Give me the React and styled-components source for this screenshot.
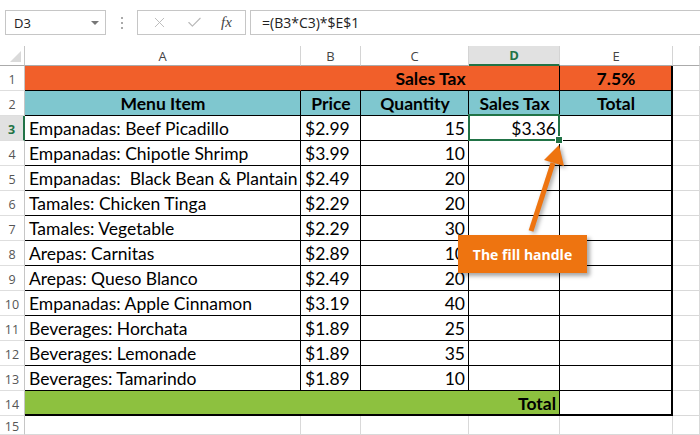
import React from "react";
import styled, { createGlobalStyle } from "styled-components";
import { X, Check } from "lucide-react";

const GlobalStyle = createGlobalStyle`
  body {
    margin: 0;
    background: #fff;
    font-family: "Lato", "Liberation Sans", sans-serif;
    overflow: hidden;
  }
`;

const GREEN = "#217346";
const GRID = "#d9d9d9";

const Page = styled.div`
  position: relative;
  width: 700px;
  height: 435px;
  overflow: hidden;
`;

const FormulaBar = styled.div`
  display: flex;
  align-items: stretch;
  height: 25px;
  padding: 10px 0 0 5px;
  margin-bottom: 11px;
`;

const NameBox = styled.div`
  width: 101px;
  box-sizing: border-box;
  border: 1px solid #c6c6c6;
  display: flex;
  align-items: center;
  justify-content: space-between;
  padding: 0 6px 0 8px;
  font-family: "Open Sans", sans-serif;
  font-size: 13px;
  color: #222;
`;

const DropArrow = styled.span`
  width: 0;
  height: 0;
  border-left: 4px solid transparent;
  border-right: 4px solid transparent;
  border-top: 4px solid #777;
`;

const Dots = styled.div`
  width: 31px;
  display: flex;
  flex-direction: column;
  align-items: center;
  justify-content: center;
  gap: 3px;
  span {
    width: 2px;
    height: 2px;
    background: #aaa;
  }
`;

const ButtonBox = styled.div`
  width: 109px;
  box-sizing: border-box;
  border: 1px solid #c6c6c6;
  display: flex;
  align-items: center;
  justify-content: space-around;
  padding: 0 4px;
  color: #b8b8b8;
`;

const Fx = styled.span`
  font-family: "Liberation Serif", serif;
  font-style: italic;
  font-size: 15px;
  color: #444;
`;

const FormulaInput = styled.div`
  flex: 1;
  margin-left: 4px;
  border: 1px solid #c6c6c6;
  border-right: none;
  display: flex;
  align-items: center;
  padding-left: 11px;
  font-family: "Open Sans", sans-serif;
  font-size: 14px;
  color: #222;
`;

const Sheet = styled.div`
  display: grid;
  grid-template-columns: 25px 276px 60px 108px 91px 113px 1fr;
  grid-template-rows: 20px repeat(14, 25px) 19px;
`;

const Corner = styled.div`
  position: relative;
  box-sizing: border-box;
  border-right: 1px solid #c6c6c6;
  border-bottom: 1px solid #ababab;
  &::after {
    content: "";
    position: absolute;
    right: 3px;
    bottom: 3px;
    border-left: 11px solid transparent;
    border-bottom: 11px solid #dadada;
  }
`;

const ColHead = styled.div`
  box-sizing: border-box;
  display: flex;
  align-items: center;
  justify-content: center;
  font-family: "Open Sans", sans-serif;
  font-size: 13px;
  color: ${(p) => (p.$active ? GREEN : "#444")};
  font-weight: ${(p) => (p.$active ? 700 : 400)};
  background: ${(p) => (p.$active ? "#e1e1e1" : "#fff")};
  border-right: 1px solid #d4d4d4;
  border-bottom: ${(p) => (p.$active ? `2px solid ${GREEN}` : "1px solid #ababab")};
`;

const RowHead = styled.div`
  box-sizing: border-box;
  display: flex;
  align-items: center;
  justify-content: center;
  padding-top: 2px;
  font-family: "Open Sans", sans-serif;
  font-size: 12.5px;
  color: ${(p) => (p.$active ? GREEN : "#555")};
  font-weight: ${(p) => (p.$active ? 700 : 400)};
  background: ${(p) => (p.$active ? "#e1e1e1" : "#fff")};
  border-right: ${(p) => (p.$active ? `2px solid ${GREEN}` : "1px solid #c6c6c6")};
  border-bottom: 1px solid #dedede;
`;

const Cell = styled.div`
  position: relative;
  box-sizing: border-box;
  display: flex;
  align-items: center;
  justify-content: ${(p) =>
    p.$align === "right" ? "flex-end" : p.$align === "center" ? "center" : "flex-start"};
  grid-column: ${(p) => (p.$span ? `span ${p.$span}` : "auto")};
  padding: 1px 3px 0 4px;
  background: ${(p) => p.$bg || "#fff"};
  font-size: 17.5px;
  font-weight: ${(p) => (p.$bold ? 700 : 400)};
  color: #000;
  white-space: pre;
  border-right: ${(p) => p.$right || "1px solid #000"};
  border-bottom: ${(p) => p.$bottom || "1px solid #000"};
  ${(p) =>
    p.$selected &&
    `
    &::after {
      content: "";
      position: absolute;
      left: -1px;
      top: -2px;
      right: -1px;
      bottom: -1px;
      border: 2px solid ${GREEN};
      pointer-events: none;
    }
    &::before {
      content: "";
      position: absolute;
      right: -4px;
      bottom: -4px;
      width: 6px;
      height: 6px;
      background: ${GREEN};
      border: 1px solid #fff;
      z-index: 2;
    }
  `}
`;

const GridCell = styled.div`
  box-sizing: border-box;
  border-right: 1px solid ${GRID};
  border-bottom: 1px solid ${GRID};
`;

const Arrow = styled.svg`
  position: absolute;
  left: 0;
  top: 0;
  pointer-events: none;
  filter: drop-shadow(2px 2px 2px rgba(0, 0, 0, 0.35));
`;

const Callout = styled.div`
  position: absolute;
  left: 458px;
  top: 235px;
  width: 129px;
  height: 38px;
  background: #ee7410;
  color: #fff;
  font-family: "Open Sans", sans-serif;
  font-weight: 700;
  font-size: 14px;
  display: flex;
  align-items: center;
  justify-content: center;
  box-shadow: 3px 3px 4px rgba(0, 0, 0, 0.35);
`;

const ORANGE = "#f15f2a";
const TEAL = "#7fc7cf";
const LIME = "#8dc13f";
const THICK = "2px solid #000";

const items = [
  ["Empanadas: Beef Picadillo", "$2.99", "15"],
  ["Empanadas: Chipotle Shrimp", "$3.99", "10"],
  ["Empanadas:  Black Bean & Plantain", "$2.49", "20"],
  ["Tamales: Chicken Tinga", "$2.29", "20"],
  ["Tamales: Vegetable", "$2.29", "30"],
  ["Arepas: Carnitas", "$2.89", "10"],
  ["Arepas: Queso Blanco", "$2.49", "20"],
  ["Empanadas: Apple Cinnamon", "$3.19", "40"],
  ["Beverages: Horchata", "$1.89", "25"],
  ["Beverages: Lemonade", "$1.89", "35"],
  ["Beverages: Tamarindo", "$1.89", "10"],
];

const App = () => {
  return (
    <Page>
      <GlobalStyle />
      <FormulaBar>
        <NameBox>
          D3
          <DropArrow />
        </NameBox>
        <Dots>
          <span />
          <span />
          <span />
        </Dots>
        <ButtonBox>
          <X size={17} strokeWidth={1.3} />
          <Check size={17} strokeWidth={1.6} />
          <Fx>fx</Fx>
        </ButtonBox>
        <FormulaInput>=(B3*C3)*$E$1</FormulaInput>
      </FormulaBar>

      <Sheet>
        <Corner />
        {["A", "B", "C", "D", "E", ""].map((c) => (
          <ColHead key={c || "F"} $active={c === "D"}>
            {c}
          </ColHead>
        ))}

        {/* row 1 */}
        <RowHead>1</RowHead>
        <Cell $bg={ORANGE} $right={`1px solid ${ORANGE}`} />
        <Cell $bg={ORANGE} $span={3} $align="center" $bold>
          Sales Tax
        </Cell>
        <Cell $bg={ORANGE} $align="center" $bold $right={THICK}>
          7.5%
        </Cell>
        <GridCell />

        {/* row 2 */}
        <RowHead>2</RowHead>
        <Cell $bg={TEAL} $align="center" $bold>Menu Item</Cell>
        <Cell $bg={TEAL} $align="center" $bold>Price</Cell>
        <Cell $bg={TEAL} $align="center" $bold>Quantity</Cell>
        <Cell $bg={TEAL} $align="center" $bold>Sales Tax</Cell>
        <Cell $bg={TEAL} $align="center" $bold $right={THICK}>Total</Cell>
        <GridCell />

        {items.map(([name, price, qty], i) => (
          <React.Fragment key={name}>
            <RowHead $active={i === 0}>{i + 3}</RowHead>
            <Cell>{name}</Cell>
            <Cell>{price}</Cell>
            <Cell $align="right">{qty}</Cell>
            <Cell $align="right" $selected={i === 0}>
              {i === 0 ? "$3.36" : ""}
            </Cell>
            <Cell $right={THICK} />
            <GridCell />
          </React.Fragment>
        ))}

        {/* row 14 */}
        <RowHead>14</RowHead>
        <Cell $bg={LIME} $span={4} $align="right" $bold $bottom={THICK}>
          Total
        </Cell>
        <Cell $right={THICK} $bottom={THICK} />
        <GridCell />

        {/* row 15 */}
        <RowHead>15</RowHead>
        {[0, 1, 2, 3, 4, 5].map((k) => (
          <GridCell key={k} />
        ))}
      </Sheet>

      <Arrow width="700" height="435" viewBox="0 0 700 435">
        <line x1="531" y1="231" x2="553" y2="163" stroke="#ee7410" strokeWidth="5" />
        <polygon points="559,145 564,166 544,160" fill="#ee7410" />
      </Arrow>
      <Callout>The fill handle</Callout>
    </Page>
  );
};

export default App;
